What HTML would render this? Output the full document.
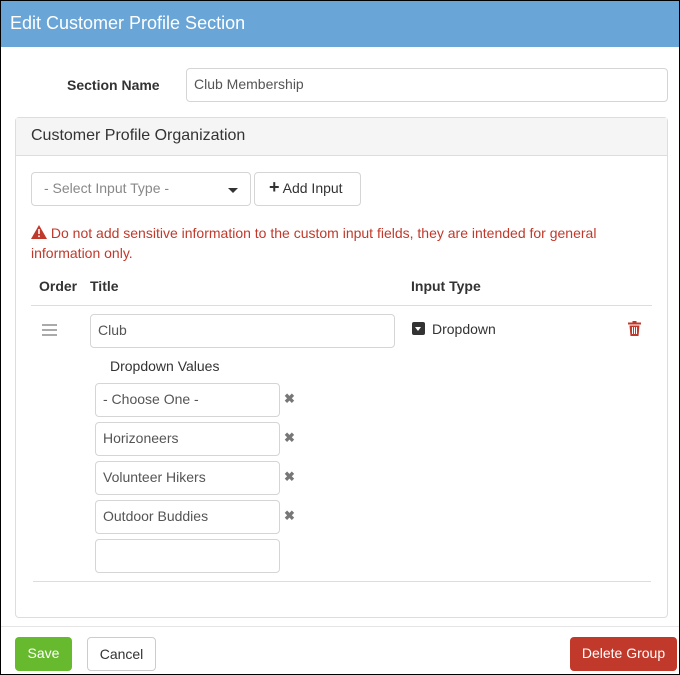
<!DOCTYPE html>
<html><head><meta charset="utf-8"><style>
*{box-sizing:border-box;margin:0;padding:0}
body{width:680px;height:675px;position:relative;background:#fff;font-family:"Liberation Sans",sans-serif;font-size:14px;color:#333;overflow:hidden}
.a{position:absolute}
.frame{left:0;top:0;width:680px;height:675px;border:1px solid #000}
.hdr{left:1px;top:1px;width:678px;height:46px;background:#69a5d7;color:#fff;font-size:18px;padding:12px 0 0 9px}
.inp{position:absolute;border:1px solid #d5d5d5;border-radius:4px;height:34px;padding:7px 7px;font-size:14px;color:#555;background:#fff}
.x{position:absolute;font-size:13px;font-weight:bold;color:#777}
.btn{position:absolute;height:34px;border-radius:4px;font-size:14px;text-align:center;padding-top:8px}
</style></head><body>
<div class="a frame"></div>
<div class="a hdr">Edit Customer Profile Section</div>
<div class="a" style="left:67px;top:77px;font-weight:bold;font-size:14px">Section Name</div>
<div class="inp" style="left:186px;top:68px;width:482px">Club Membership</div>
<div class="a" style="left:15px;top:117px;width:653px;height:501px;border:1px solid #ddd;border-radius:4px"></div>
<div class="a" style="left:16px;top:118px;width:651px;height:38px;background:#f5f5f5;border-bottom:1px solid #ddd;font-size:16px;padding:9px 0 0 15px">Customer Profile Organization</div>
<div class="inp" style="left:31px;top:172px;width:220px;color:#888;padding-left:12px">- Select Input Type -<span style="position:absolute;right:12px;top:15px;border:5px solid transparent;border-top:5px solid #333;border-bottom:0"></span></div>
<div class="inp" style="left:254px;top:172px;width:107px;color:#333;padding-left:14px"><b style="font-size:18px;line-height:14px">+</b> Add Input</div>
<div class="a" style="left:31px;top:223px;width:600px;color:#c0392b;font-size:14px;line-height:20px"><svg width="16" height="14" viewBox="0 0 16 14" style="vertical-align:-1px"><path d="M8 0L16 14H0Z" fill="#c0392b"/><rect x="7.2" y="4" width="1.6" height="5" fill="#fff"/><rect x="7.2" y="10.5" width="1.6" height="1.6" fill="#fff"/></svg> Do not add sensitive information to the custom input fields, they are intended for general information only.</div>
<div class="a" style="left:39px;top:278px;font-weight:bold">Order</div>
<div class="a" style="left:90px;top:278px;font-weight:bold">Title</div>
<div class="a" style="left:411px;top:278px;font-weight:bold">Input Type</div>
<div class="a" style="left:31px;top:305px;width:621px;height:1px;background:#ddd"></div>
<div class="a" style="left:42px;top:324px;width:15px;height:2px;background:#aaa;box-shadow:0 5px 0 #aaa,0 10px 0 #aaa"></div>
<div class="inp" style="left:90px;top:314px;width:305px">Club</div>
<div class="a" style="left:412px;top:322px;width:13px;height:13px;background:#333;border-radius:2px"><span style="position:absolute;left:3px;top:5px;border:3.5px solid transparent;border-top:4px solid #fff;border-bottom:0"></span></div>
<div class="a" style="left:432px;top:321px">Dropdown</div>
<svg class="a" style="left:628px;top:321px" width="13" height="15" viewBox="0 0 13 15"><rect x="0" y="1.5" width="13" height="2" fill="#c0392b"/><rect x="4.5" y="0" width="4" height="2" fill="#c0392b"/><path d="M1.5 4.5h10l-1 10.5h-8z" fill="#c0392b"/><rect x="4" y="6" width="1" height="7" fill="#fff"/><rect x="6" y="6" width="1" height="7" fill="#fff"/><rect x="8" y="6" width="1" height="7" fill="#fff"/></svg>
<div class="a" style="left:110px;top:358px">Dropdown Values</div>
<div class="inp" style="left:95px;top:383px;width:185px">- Choose One -</div><div class="x" style="left:284px;top:391px">✖</div>
<div class="inp" style="left:95px;top:422px;width:185px">Horizoneers</div><div class="x" style="left:284px;top:430px">✖</div>
<div class="inp" style="left:95px;top:461px;width:185px">Volunteer Hikers</div><div class="x" style="left:284px;top:469px">✖</div>
<div class="inp" style="left:95px;top:500px;width:185px">Outdoor Buddies</div><div class="x" style="left:284px;top:508px">✖</div>
<div class="inp" style="left:95px;top:539px;width:185px"></div>
<div class="a" style="left:33px;top:581px;width:618px;height:1px;background:#ddd"></div>
<div class="a" style="left:1px;top:626px;width:678px;height:1px;background:#e5e5e5"></div>
<div class="btn" style="left:15px;top:637px;width:57px;background:#67b92e;color:#fff">Save</div>
<div class="btn" style="left:87px;top:637px;width:69px;border:1px solid #ccc;color:#333">Cancel</div>
<div class="btn" style="left:570px;top:637px;width:107px;background:#c0392b;color:#fff">Delete Group</div>
</body></html>
